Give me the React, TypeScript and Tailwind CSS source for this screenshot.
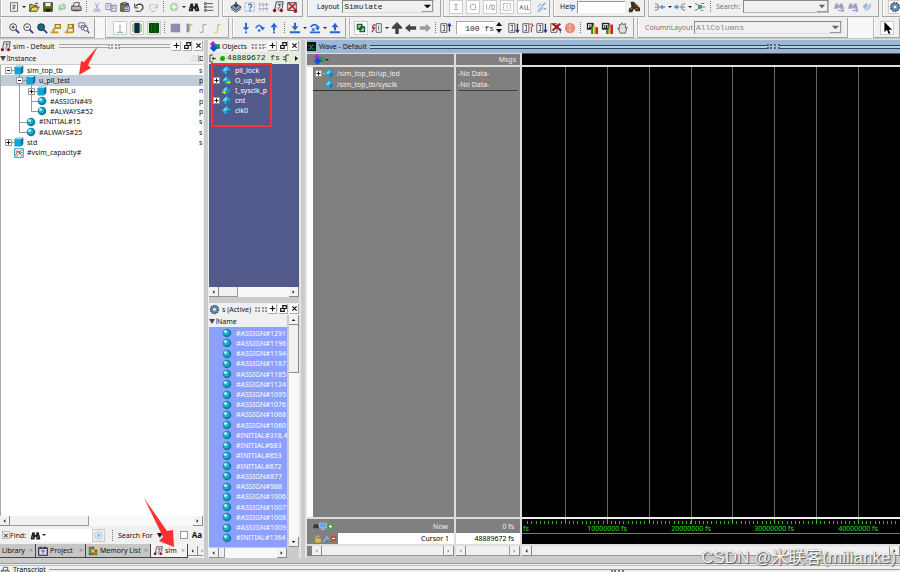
import type { ReactNode } from 'react'

const icons: Record<string, ReactNode> = {
  doc: <><path d="M3 2h8v10H3z" fill="#fff" stroke="#555" /><path d="M5 5h4M5 7h4M5 9h3M7 4v6" stroke="#666" /></>,
  open: <><path d="M2 12V4h3l1 1h4v2" fill="#d8c030" stroke="#333" /><path d="M2 12l3-5h8l-3 5z" fill="#e8dc50" stroke="#333" /><path d="M8 3q3-2 4 1" fill="none" stroke="#333" /></>,
  save: <><path d="M2 2h10v10H2z" fill="#6b7400" stroke="#222" /><path d="M4 2h6v4H4z" fill="#eee" /><path d="M4 9h6v3H4z" fill="#222" /></>,
  refresh: <><path d="M2 7q1-4 6-3V2l4 3-4 3V6Q5 5 4 8z" fill="#a9d6b4" /><path d="M12 7q-1 4-6 3v2L2 9l4-3v2q3 1 4-2z" fill="#93cda4" /></>,
  print: <><path d="M4 6l1-4h6l-1 4" fill="#fff" stroke="#333" /><path d="M2 6h10l1 2v3H2z" fill="#bbb" stroke="#333" /><path d="M4 10h7v2H4z" fill="#555" /></>,
  cut: <><path d="M5 2l3 7M9 2L6 9" stroke="#9aa3c8" fill="none" /><circle cx="5" cy="11" r="1.5" fill="none" stroke="#8890d8" /><circle cx="9" cy="11" r="1.5" fill="none" stroke="#8890d8" /></>,
  copy: <><path d="M1 3h6v7H1z" fill="#eee" stroke="#8084a8" /><path d="M7 5h6v7H7z" fill="#eee" stroke="#6a6fa8" /><path d="M3 5h2M3 7h2M8 7h3M8 9h3" stroke="#889" /></>,
  paste: <><path d="M2 3h9v9H2z" fill="#8a7a30" stroke="#333" /><path d="M4 2h5v2H4z" fill="#ccc" stroke="#333" /><path d="M6 6h6v6H6z" fill="#fff" stroke="#3040a0" /><path d="M7 8h4M7 10h4" stroke="#3040a0" /></>,
  undo: <><path d="M3 6q4-4 8-1 2 4-2 6" fill="none" stroke="#333" strokeWidth="1.3" /><path d="M2 3v5h4M3 12h6" fill="none" stroke="#222" /></>,
  redo: <><path d="M11 6Q7 2 3 5q-1 4 2 6" fill="none" stroke="#bbb" /><path d="M12 3v5H8M5 12h5" fill="none" stroke="#aaa" /></>,
  add: <><circle cx="7" cy="7" r="5" fill="#a8d5a8" /><path d="M7 4v6M4 7h6" stroke="#fff" strokeWidth="2" /></>,
  find: <><path d="M3 3h3v3h2V3h3l2 7v2H8V9H6v3H1v-2z" fill="#222" /><path d="M3 8v2M10 8v2" stroke="#8ab" /></>,
  list: <path d="M3 2h2v2H3zM3 6h2v2H3zM3 10h2v2H3zM6 3h7M6 7h7M6 11h7" stroke="#444" fill="none" />,
  stack: <><path d="M1 7l6-4 6 4-6 4z" fill="#8aa0c8" stroke="#334" /><path d="M1 9l6 4 6-4" fill="none" stroke="#334" /><path d="M7 1v6M5 5l2 2 2-2" fill="none" stroke="#235" strokeWidth="1.4" /></>,
  query: <><path d="M1 2h11v10H1z" fill="#eef" stroke="#8ab" strokeDasharray="2 1" /><path d="M5 5q2-3 4 0 0 2-2 3v1M7 10v2" fill="none" stroke="#3a78b8" strokeWidth="1.5" /></>,
  grid: <path d="M2 2v10M6 2v10M10 2v10M1 4h12M1 9h12" stroke="#8a90b8" strokeDasharray="2 1" />,
  sim: <><path d="M3 11L5 1h8l-1 7-4 4" fill="#e4e4e8" stroke="#334" /><path d="M8 3q3 3-1 7M7 4h4" fill="none" stroke="#446" /><circle cx="3" cy="11" r="2" fill="#801828" /><circle cx="11" cy="11" r="2" fill="#a11832" /></>,
  simx: <><path d="M2 2h10v9H2z" fill="#ddd" stroke="#334" /><path d="M3 2l9 9M12 2l-9 8" stroke="#c01818" strokeWidth="1.8" /><circle cx="11" cy="12" r="2" fill="#a11832" /></>,
  pipe: <path d="M5 4h4M7 4v6M5 10h4" stroke="#999" fill="none" />,
  circ: <path d="M5 4h4l1 1v4l-1 1H5l-1-1V5z" stroke="#999" fill="none" />,
  io: <><path d="M3 4v6M8 4L5 10" stroke="#999" /><path d="M9 5h3v5H9z" fill="none" stroke="#999" /></>,
  box: <path d="M3 3h8v8H3zM7 5v4" stroke="#999" fill="none" strokeDasharray="2 1" />,
  all: <path d="M2 10l2-5 2 5M3 8h2M8 5v5h2M11 5v5h2" stroke="#777" fill="none" />,
  brush: <><path d="M2 12l5-6 3 2-5 5z" fill="#a8b8e0" /><path d="M8 6l4-4M5 4h2M10 9h3M3 6h2" stroke="#78a8d8" strokeWidth="1.6" /></>,
  find2: <><path d="M3 1h4l3 4 4 3v4H9L7 9l-2 4H1V9l3-2z" fill="#332" /><path d="M8 3l4 3M3 9h2M9 9h2" stroke="#d06018" strokeWidth="1.5" /></>,
  inA: <><path d="M1 3q4 0 5 4-1 4-5 4M1 7h5" fill="none" stroke="#666" /><path d="M13 7H8M10 5L8 7l2 2" fill="none" stroke="#4a90e8" strokeWidth="1.6" /></>,
  inB: <><path d="M13 3q-4 0-5 4 1 4 5 4M13 7H8" fill="none" stroke="#666" /><path d="M1 7h5M4 5L1 7l3 2" fill="none" stroke="#4a90e8" strokeWidth="1.6" /></>,
  inC: <><path d="M1 3q4 0 5 4-1 4-5 4M6 7h7M8 3h4M8 11h3" fill="none" stroke="#666" /><circle cx="7" cy="7" r="2.5" fill="#4a9a58" /></>,
  findDim: <><path d="M3 3h3v2h2V3h3l2 6H8V8H6v1H1z" fill="#a0a4b0" /><path d="M6 11h6M10 9l3 2-3 2" fill="none" stroke="#8080e0" /></>,
  brushDim: <><path d="M2 6l4-4 2 3 4-2-1 5-5 4z" fill="#a8b4cc" /><path d="M4 11l6-6" stroke="#c8e0f0" strokeWidth="2" /></>,
  gear: <><circle cx="7" cy="7" r="5" fill="#6b8cae" stroke="#3c5a78" strokeWidth="2" strokeDasharray="2 1" /><circle cx="7" cy="7" r="1.6" fill="#fff" /></>,
  zin: <><circle cx="6" cy="6" r="4" fill="#fff" stroke="#333" /><path d="M4 6h4M6 4v4" stroke="#223" /><path d="M9 9l4 4" stroke="#3038a0" strokeWidth="2" /></>,
  zout: <><circle cx="6" cy="6" r="4" fill="#fff" stroke="#333" /><path d="M4 6h4" stroke="#223" /><path d="M9 9l4 4" stroke="#3038a0" strokeWidth="2" /></>,
  zfull: <><circle cx="6" cy="6" r="4" fill="#1b6a84" stroke="#123" /><path d="M9 9l4 4" stroke="#3038a0" strokeWidth="2" /></>,
  zcur: <><path d="M6 3h6v4H6z" fill="#eee" stroke="#a88010" strokeWidth="1.5" /><path d="M1 12h9M4 8v4M6 7l-3 3" stroke="#c89810" strokeWidth="2" /></>,
  zcur2: <><path d="M5 3h5v4H5zM11 2v10" fill="#eee" stroke="#a88010" strokeWidth="1.5" /><path d="M1 12h10M4 8v4" stroke="#c89810" strokeWidth="2" /></>,
  zsel: <><path d="M1 1h7v5H1zM4 4h6v5H4z" fill="#eee" stroke="#668" /><circle cx="9" cy="8" r="2.5" fill="#fff" stroke="#446" /><path d="M11 10l2 3" stroke="#4048b0" strokeWidth="1.6" /></>,
  w1: <><path d="M0 0h14v14H0z" fill="#fff" /><path d="M7 3v9M3 12h8" stroke="#58a878" /></>,
  w2: <><path d="M1 2h12v10H1z" fill="#a8c8a0" /><path d="M4 1h6v12H4z" fill="#102848" /></>,
  w3: <><path d="M1 1h12v12H1z" fill="#0a4a0a" /><path d="M4 2v10M8 2v10" stroke="#0c7a0c" /></>,
  w4: <><path d="M2 2h11v10H2z" fill="#8888b0" /><path d="M2 4h11M2 7h11M2 10h11" stroke="#9ab09a" strokeDasharray="1 1" /></>,
  w5: <><path d="M4 2h3v10H4z" fill="#8890b0" /><path d="M8 2v4l-1 6M8 3h3" stroke="#c0c040" strokeWidth="1.4" fill="none" /></>,
  w6: <path d="M3 12h4V3h4" fill="none" stroke="#70b080" />,
  w7: <path d="M3 12h4l1-5V3h3" fill="none" stroke="#c8cc50" strokeWidth="1.3" />,
  stepIn: <><path d="M7 1v7" stroke="#2468d8" strokeWidth="2.4" /><path d="M3 6h8l-4 4z" fill="#2468d8" /><circle cx="7" cy="12" r="1.3" fill="#2468d8" /></>,
  stepOver: <><path d="M2 7q4-6 8 0" fill="none" stroke="#3080e0" strokeWidth="2" /><path d="M7 6h6l-3 4z" fill="#2468d8" /><circle cx="6" cy="10" r="1.5" fill="#2468d8" /></>,
  stepOut: <><path d="M7 10V4" stroke="#2468d8" strokeWidth="2.4" /><path d="M3 6h8L7 1z" fill="#2468d8" /><circle cx="7" cy="12" r="1.3" fill="#2468d8" /></>,
  stepInB: <><path d="M7 1v5M1 12h12" stroke="#2468d8" strokeWidth="2.4" /><path d="M3 5h8l-4 5z" fill="#2468d8" /></>,
  stepOverB: <><path d="M2 6q4-6 9 0M1 12h12" fill="none" stroke="#2468d8" strokeWidth="2" /><path d="M7 6h6l-3 4z" fill="#2468d8" /><circle cx="5" cy="9" r="2" fill="#4088e8" /></>,
  stepOutB: <><path d="M7 10V4M1 12h12" stroke="#2468d8" strokeWidth="2.4" /><path d="M3 6h8L7 1z" fill="#2468d8" /></>,
  restart: <path d="M3 3h5v5H3zM6 6h5v5H6z" fill="none" stroke="#106828" strokeWidth="1.8" />,
  runDoc: <><path d="M6 2h6v10H6zM9 4v6" fill="#fff" stroke="#444" /><path d="M5 3Q1 4 2 7h2l-3 5" fill="none" stroke="#b02850" strokeWidth="1.5" /></>,
  up: <path d="M7 0l6 6v2H9v6H5V8H1V6z" fill="#444" />,
  left: <path d="M0 7l6-5v3h7v4H6v3z" fill="#444" />,
  right: <path d="M14 7L8 2v3H1v4h7v3z" fill="#999" />,
  run: <><path d="M1 2h7v10H1zM5 4v6M3 4h3M3 10h3" fill="#fff" stroke="#445" /><path d="M11 2v9M9 5l2-3 2 3" fill="none" stroke="#2030a0" strokeWidth="1.4" /></>,
  runDown: <><path d="M1 2h7v10H1zM5 4v6M3 4h3M3 10h3" fill="#fff" stroke="#445" /><path d="M11 2v9M9 9l2 3 2-3" fill="none" stroke="#2030a0" strokeWidth="1.4" /></>,
  runRed: <><path d="M1 2h7v10H1zM5 4v6M3 4h3M3 10h3" fill="#fff" stroke="#445" /><path d="M11 6v6M9 3l2-1 2 2-2 2" fill="none" stroke="#d04848" strokeWidth="1.4" /></>,
  runX: <><path d="M1 2h7v10H1z" fill="#fff" stroke="#445" /><path d="M3 2l10 8M12 2l-9 8" stroke="#a01818" strokeWidth="2.4" /><path d="M12 8v5" stroke="#2030a0" /></>,
  stop: <><circle cx="7" cy="7" r="6" fill="#e88878" /><path d="M4 5h6M4 9h6M7 2v10" stroke="#f8c0b0" /></>,
  pa: <><path d="M1 1h8v8H1z" fill="#222" /><path d="M3 7V3h3v2H3" stroke="#fff" fill="none" /><path d="M6 6h3v8H6z" fill="#283" /><path d="M8 4h3v10H8z" fill="#dc2" /><path d="M11 6h3v8h-3z" fill="#c22" /></>,
  mem: <><path d="M1 1h9v8H1z" fill="#222" /><path d="M3 7V3h5v4M5 3v4" stroke="#fff" fill="none" /><path d="M6 8h3v6H6z" fill="#283" /><path d="M9 6h2v8H9z" fill="#dc2" /><path d="M11 3h3v11h-3z" fill="#c22" /></>,
  hand: <path d="M2 7l2 1V3h2l1-2 1 2 3-1v5l2-1-2 7H5z" fill="#ddd" stroke="#555" />,
  arrow: <path d="M4 0v12l3-3 2 5 2-1-2-4h4z" fill="#000" />,
  cube: <><path d="M1 3l2-2h10v9l-3 3H1z" fill="#0c6c94" /><path d="M1 3h9v10H1z" fill="#12a4d4" /><path d="M1 3l2-2h10l-3 2z" fill="#8fe4f4" /></>,
  ball: <><circle cx="7" cy="7" r="6" fill="#1180a4" /><circle cx="6" cy="6" r="4" fill="#22b0d2" /><circle cx="5" cy="5" r="2" fill="#d0f8fc" /></>,
  diamond: <><path d="M7 0l7 7-7 7-7-7z" fill="#1478b0" /><path d="M7 0l7 7H7v7L0 7z" fill="#2aa8dc" /><path d="M7 1v6H1z" fill="#80dcf0" /></>,
  diamondOut: <><path d="M7 0l7 7-7 7-7-7z" fill="#1c8fc0" /><path d="M7 1v6H1z" fill="#8be0f0" /><path d="M7 9h3V7l4 3-4 3v-2H7z" fill="#c8f020" /></>,
  diamondIn: <><path d="M7 0l7 7-7 7-7-7z" fill="#1c8fc0" /><path d="M7 1v6H1z" fill="#8be0f0" /><path d="M0 9h3V7l4 3-4 3v-2H0z" fill="#c8f020" /></>,
  capacity: <><path d="M1 1h12v12H1z" fill="#fff" stroke="#2a9ac0" strokeWidth="1.5" /><path d="M2 10l4-6 5 7M3 4l4 2 4-3" stroke="#d03838" strokeWidth="1.4" fill="none" /><path d="M3 12l4-4 5-2" stroke="#28a048" strokeWidth="1.4" fill="none" /></>,
  objects: <><path d="M5 0l4 4-4 4-4-4z" fill="#c020c8" /><path d="M7 4h7v6H7z" fill="#18a050" /><path d="M6 4l5 5-5 5-5-5z" fill="#1450e0" /></>,
  wave: <><path d="M0 0h14v14H0z" fill="#111" /><path d="M2 5h3v2h3V5h3M2 11h3V9h3v2h4" stroke="#28c078" fill="none" /></>,
  project: <><path d="M1 3h12v10H1z" fill="#dde" stroke="#223" strokeWidth="1.5" /><path d="M2 1h3v3H2zM8 1h3v3H8z" fill="#336" /><path d="M4 7h6M7 5v6" stroke="#8060a0" strokeWidth="1.5" /></>,
  memory: <><path d="M1 1h12v12H1z" fill="#dd3" /><path d="M1 1h4v4H1zM9 5h4v4H9zM5 9h4v4H5z" fill="#d33" /><path d="M5 1h4v4H5zM1 9h4v4H1z" fill="#36c" /><path d="M1 5h4v4H1zM9 9h4v4H9z" fill="#2a4" /></>,
  go: <><circle cx="7" cy="7" r="5" fill="#dce8f4" stroke="#b0c4d8" /><path d="M6 4l4 3-4 3z" fill="#98b4d0" /></>,
  screen: <path d="M1 2h12v8H8l2 3H4l2-3H1z" fill="#6aa0e8" stroke="#c0d8f8" />,
  addSm: <><circle cx="7" cy="7" r="6" fill="#48a848" /><path d="M7 4v6M4 7h6" stroke="#fff" strokeWidth="2" /></>,
  del: <><circle cx="7" cy="7" r="6" fill="#e04030" /><path d="M4 7h6" stroke="#fff" strokeWidth="2" /></>,
  lock: <><path d="M2 6h10v7H2z" fill="#e8b838" /><path d="M4 6V3q3-3 6 0" fill="none" stroke="#e0c880" strokeWidth="1.6" /></>,
  wrench: <path d="M2 12l7-8M8 2l1 3 3 1" stroke="#88b8f0" strokeWidth="2.6" fill="none" />,
}

function Icon({ name, size = 14 }: { name: string; size?: number }) {
  return (
    <svg width={size} height={size} viewBox="0 0 14 14" className="shrink-0" aria-hidden="true">
      {icons[name]}
    </svg>
  )
}

function Tool({ name, raised }: { name: string; raised?: boolean }) {
  return (
    <button
      aria-label={name}
      className={raised
        ? 'flex w-[14px] h-[14px] shrink-0 items-center justify-center bg-white border border-[#ccc]'
        : 'flex w-[14px] h-[14px] shrink-0 items-center justify-center'}
    >
      <Icon name={name} size={12} />
    </button>
  )
}

function Caret() {
  return (
    <svg width="6" height="14" viewBox="0 0 6 14" className="shrink-0" aria-hidden="true">
      <path d="M1 6h4L3 8z" fill="#222" />
    </svg>
  )
}

function Sep() {
  return <div className="mx-[3px] h-[11px] shrink-0 border-l border-dotted border-[#777]" />
}

// '|' is a separator, 'v' a drop-down caret, anything else an icon
function Tools({ items, raised }: { items: string; raised?: boolean }) {
  return (
    <>
      {items.split(' ').map((it, i) =>
        it === '|' ? <Sep key={i} /> : it === 'v' ? <Caret key={i} /> : <Tool key={i} name={it} raised={raised} />
      )}
    </>
  )
}

function Group({ className, children }: { className: string; children: ReactNode }) {
  return (
    <div className={`flex shrink-0 items-center border-r border-b border-l border-[#a4a4a4] border-l-[#b8b8b8] shadow-[inset_1px_0_0_#fff] ${className}`}>
      {children}
    </div>
  )
}

function Combo({ label, value, className, dim }: { label: string; value: string; className: string; dim?: boolean }) {
  return (
    <div className={`flex h-[13px] border border-t-[#888] border-l-[#888] border-b-[#ddd] border-r-[#ddd] ${className}`}>
      <select
        aria-label={label}
        className={`min-w-0 flex-1 appearance-none px-px font-['Liberation_Mono',monospace] text-[8px] leading-none ${dim ? 'text-[#888]' : 'text-[#222]'}`}
      >
        <option>{value}</option>
      </select>
      <svg width="11" height="11" viewBox="0 0 11 11" className="shrink-0 border-r border-b border-[#999] bg-[#f0f0f0]" aria-hidden="true">
        <path d="M2 4h8L6 8z" fill={dim ? '#666' : '#000'} />
      </svg>
    </div>
  )
}

function PanelTitle({ icon, title }: { icon: string; title: string }) {
  return (
    <div className="flex h-[12px] shrink-0 items-center gap-[2px] bg-[#f0f0f0]">
      <Icon name={icon} size={11} />
      <span className="whitespace-nowrap">{title}</span>
      <div className="ml-[2px] flex h-[4px] min-w-0 flex-1 items-center justify-center border-y border-[#a8a8a8]">
        <div className="h-[5px] w-[12px] shrink-0 border-y-2 border-dotted border-[#999] bg-[#f0f0f0]" />
      </div>
      {['M5 1v8M1 5h8', 'M4 1h5v4H4zM1 5h5v4H1z', 'M2 2l6 6M8 2l-6 6'].map((d, i) => (
        <button key={d} aria-label={['Zoom', 'Undock', 'Close'][i]} className="flex h-[10px] w-[9px] items-center justify-center border-r border-b border-[#aaa] bg-white">
          <svg width="7" height="7" viewBox="0 0 10 10" aria-hidden="true"><path d={d} fill="none" stroke="#111" strokeWidth="1.7" /></svg>
        </button>
      ))}
    </div>
  )
}

function Arrow({ dir, dim }: { dir: 'l' | 'r' | 'u' | 'd'; dim?: boolean }) {
  const d = { l: 'M6 3v4L4 5z', r: 'M4 3v4l2-2z', u: 'M3 6h4L5 4z', d: 'M3 4h4L5 6z' }[dir]
  return (
    <button aria-label="Scroll" className="flex h-[10px] w-[10px] shrink-0 items-center justify-center border-r border-b border-[#888] bg-[#f2f2f2]">
      <svg width="10" height="10" viewBox="0 0 10 10" aria-hidden="true"><path d={d} fill={dim ? '#999' : '#111'} /></svg>
    </button>
  )
}

function HScroll({ thumb, dim }: { thumb: string; dim?: boolean }) {
  return (
    <div className="flex h-[10px] shrink-0 bg-[#f8f8f8]">
      <Arrow dir="l" dim={dim} />
      <div className="flex min-w-0 flex-1">
        <div className={`border-r border-b border-[#999] bg-[#f0f0f0] ${thumb}`} />
      </div>
      <Arrow dir="r" dim={dim} />
    </div>
  )
}

function PlusBox() {
  return (
    <svg width="7" height="7" viewBox="0 0 7 7" className="shrink-0" aria-hidden="true">
      <path d="M.5 .5h6v6h-6z" fill="#fff" stroke="#999" />
      <path d="M1.500 3.500h4M3.500 1.500v4" stroke="#111" />
    </svg>
  )
}

type Node = { label: string; depth: number; icon: string; box?: '+' | '-'; kind: string; rails?: number[]; end?: boolean }

const tree: Node[] = [
  { label: 'sim_top_tb', depth: 0, icon: 'cube', box: '-', kind: 's' },
  { label: 'u_pll_test', depth: 1, icon: 'cube', box: '-', kind: 'p', rails: [18] },
  { label: 'mypll_u', depth: 2, icon: 'cube', box: '+', kind: 'm', rails: [18, 30] },
  { label: '#ASSIGN#49', depth: 2, icon: 'ball', kind: 'p', rails: [18, 30] },
  { label: '#ALWAYS#52', depth: 2, icon: 'ball', kind: 'p', rails: [18, 30], end: true },
  { label: '#INITIAL#15', depth: 1, icon: 'ball', kind: 's', rails: [18] },
  { label: '#ALWAYS#25', depth: 1, icon: 'ball', kind: 's', rails: [18], end: true },
  { label: 'std', depth: 0, icon: 'cube', box: '+', kind: 's' },
  { label: '#vsim_capacity#', depth: 0, icon: 'capacity', kind: '' },
]

const indent = ['w-[13px]', 'w-[25px]', 'w-[36px]']

function TreeRow({ node, selected }: { node: Node; selected: boolean }) {
  const x = [7, 18, 30][node.depth]
  const rails = node.rails ?? []
  return (
    <div role="treeitem" aria-selected={selected} className={`flex min-h-0 flex-1 items-center ${selected ? 'bg-[#c0cdd8]' : ''}`}>
      <svg className={`h-[10px] shrink-0 overflow-visible ${indent[node.depth]}`} aria-hidden="true">
        {rails.map((r, i) => (
          <line key={r} x1={r + 0.5} x2={r + 0.5} y1="-1" y2={node.end && i === rails.length - 1 ? 5 : 11} stroke="#999" />
        ))}
        {node.icon !== 'capacity' && <line x1={x} x2={x + 8} y1="5.500" y2="5.500" stroke="#999" />}
        {node.box && (
          <svg x={x - 3} y="2" width="7" height="7">
            <path d="M.5 .5h6v6h-6z" fill="#fff" stroke="#999" />
            <path d={node.box === '-' ? 'M2 3.500h3' : 'M1.500 3.500h4M3.500 1.500v4'} stroke="#111" />
          </svg>
        )}
      </svg>
      <Icon name={node.icon} size={10} />
      <span className="ml-[3px] flex-1">{node.label}</span>
      <span className="w-[4px]">{node.kind}</span>
    </div>
  )
}

const objects = [
  { label: 'pll_lock', icon: 'diamond' },
  { label: 'O_up_led', icon: 'diamondOut', box: true },
  { label: 'I_sysclk_p', icon: 'diamondIn' },
  { label: 'cnt', icon: 'diamond', box: true },
  { label: 'clk0', icon: 'diamond' },
]

const processes = [
  '#ASSIGN#1291', '#ASSIGN#1196', '#ASSIGN#1194', '#ASSIGN#1187', '#ASSIGN#1185', '#ASSIGN#1124', '#ASSIGN#1095',
  '#ASSIGN#1076', '#ASSIGN#1068', '#ASSIGN#1060', '#INITIAL#318,4', '#INITIAL#683', '#INITIAL#853', '#INITIAL#872',
  '#ASSIGN#877', '#ASSIGN#988', '#ASSIGN#1006', '#ASSIGN#1007', '#ASSIGN#1008', '#ASSIGN#1009', '#INITIAL#1364',
]

const gridX = [43, 85, 127, 169, 210, 252, 294, 336]

function Toolbars() {
  return (
    <header className="shrink-0 overflow-hidden border-b border-[#c8c8c8]">
      <div className="flex h-[18px] pb-px">
        <Group className="w-[219px] pb-[3px] pl-[6px]">
          <Tools items="doc v open save refresh print | cut copy paste undo redo | add v find list" />
        </Group>
        <Group className="ml-[3px] w-[81px] pb-[3px] pl-[6px]">
          <Tools items="stack query grid sim simx" />
        </Group>
        <Group className="ml-[4px] w-[134px] pb-[3px] pl-[9px]">
          <span>Layout</span>
          <Combo label="Layout" value="Simulate" className="ml-[3px] w-[92px]" />
        </Group>
        <Group className="ml-[2px] w-[107px] gap-[3px] pb-[3px] pl-[5px]">
          <Tools items="pipe circ io box all" raised />
          <Tool name="brush" />
        </Group>
        <Group className="ml-[3px] w-[92px] pb-[3px] pl-[6px]">
          <label htmlFor="help">Help</label>
          <input id="help" className="mx-[2px] h-[12px] w-[48px] border-t border-l border-[#999] bg-white" />
          <Tool name="find2" />
        </Group>
        <Group className="ml-[3px] w-[231px] pb-[3px] pl-[4px]">
          <Tools items="inA v inB v inC |" />
          <label htmlFor="search" className="ml-[2px] text-[#777]">Search:</label>
          <div className="ml-[3px] flex h-[13px] w-[86px] border border-[#bbb] border-t-[#888] border-l-[#888]">
            <input id="search" className="min-w-0 flex-1" />
            <svg width="11" height="11" viewBox="0 0 11 11" className="border-r border-b border-[#999]" aria-hidden="true"><path d="M2 4h7L5.500 8z" fill="#666" /></svg>
          </div>
          <div className="ml-[3px] flex"><Tools items="findDim findDim brushDim" /></div>
        </Group>
        <Group className="ml-[3px] flex-1 pb-[3px] pl-[5px]">
          <Tool name="gear" raised />
        </Group>
      </div>
      <div className="flex h-[20px]">
        <Group className="w-[95px] pl-[6px]">
          <Tools items="zin zout zfull zcur zcur2 zsel" />
        </Group>
        <div className="w-[10px] bg-[#f8f8f8]" />
        <Group className="w-[124px] pl-[7px]">
          <div className="flex gap-[3px]"><Tools items="w1 w2 w3" raised /></div>
          <Tools items="| w4 w5 w6 w7" />
        </Group>
        <Group className="ml-[3px] w-[114px] pl-[6px]">
          <Tools items="stepIn stepOver stepOut | stepInB v stepOverB v stepOutB" />
        </Group>
        <Group className="ml-[3px] w-[285px] pl-[4px]">
          <Tool name="restart" raised />
          <div className="ml-[2px] flex items-center"><Tools items="runDoc v up left right | run" /></div>
          <input aria-label="Run length" defaultValue="100 fs" className="ml-[3px] h-[13px] w-[39px] border-t border-l border-[#aaa] bg-white px-px text-right font-['Liberation_Mono',monospace] text-[8px] text-[#222]" />
          <svg width="8" height="13" viewBox="0 0 8 13" className="mr-[4px] bg-[#eee]" aria-hidden="true"><path d="M1 5h6L4 1zM1 8h6l-3 4z" fill="#111" /></svg>
          <Tools items="runDown runRed runDown runX stop |" />
          <div className="ml-px flex gap-px"><Tools items="pa mem hand" /></div>
        </Group>
        <Group className="ml-[3px] w-[211px] pl-[7px]">
          <span className="text-[#777]">ColumnLayout</span>
          <Combo label="ColumnLayout" value="AllColumns" dim className="mr-[5px] ml-px min-w-0 flex-1" />
        </Group>
        <div className="w-[25px] bg-[#f8f8f8]" />
        <Group className="flex-1 pl-[6px]">
          <Tool name="arrow" raised />
        </Group>
      </div>
    </header>
  )
}

function SimPanel() {
  return (
    <section className="flex w-[203px] shrink-0 flex-col bg-[#f0f0f0]">
      <PanelTitle icon="sim" title="sim - Default" />
      <div className="flex h-[13px] shrink-0 items-center border-b border-[#ccc] bg-[#f0f0f0]">
        <span className="w-[8px] border-r border-[#999] text-[6px] text-[#444]">▼</span>
        <span className="flex-1">Instance</span>
        <span className="text-[6px] text-[#888]">△</span>
        <span className="ml-px w-[5px] border-l border-[#999]">D</span>
      </div>
      <div className="min-h-0 flex-1 overflow-hidden border-l border-[#aaa] bg-white">
        <div role="tree" className="flex h-[93px] flex-col">
          {tree.map((n, i) => <TreeRow key={n.label} node={n} selected={i === 1} />)}
        </div>
      </div>
      <HScroll thumb="w-[79px]" />
      <div className="flex h-[18px] shrink-0 items-center">
        <button aria-label="Close find" className="ml-[2px] flex h-[8px] w-[8px] items-center justify-center border border-[#bbb]">✕</button>
        <label htmlFor="find">Find:</label>
        <div className="ml-[4px] flex h-[13px] w-[75px] items-center bg-white">
          <Icon name="find" size={11} />
          <Caret />
          <input id="find" className="min-w-0 flex-1" />
          <button aria-label="Find next" className="border border-[#ccc] bg-[#eee]"><Icon name="go" size={11} /></button>
        </div>
        <div className="ml-[4px] flex items-center"><Sep /></div>
        <button className="ml-[2px] flex items-center whitespace-nowrap">Search For<span className="ml-[4px] text-[6px]">▼</span></button>
        <input type="checkbox" aria-label="Match case" className="ml-auto h-[8px] w-[8px] appearance-none border border-[#999] bg-white" />
        <span className="mr-px ml-[4px] text-[8px] font-bold">Aa</span>
      </div>
      <div className="flex h-[14px] shrink-0 items-stretch">
        {[
          { label: 'Library', w: 'w-[36px]' },
          { label: 'Project', icon: 'project', w: 'w-[50px]' },
          { label: 'Memory List', icon: 'memory', w: 'w-[65px]' },
          { label: 'sim', icon: 'sim', w: 'w-[37px]' },
        ].map(t => (
          <button key={t.label} className={`flex items-center gap-[2px] border-r border-b border-[#444] pl-[2px] whitespace-nowrap ${t.w} ${t.label === 'sim' ? 'bg-[#f4f4f4]' : 'bg-[#c6c6c6]'}`}>
            {t.icon && <Icon name={t.icon} size={10} />}
            {t.label}
            <span className="ml-auto pr-[2px] text-[#888]">×</span>
          </button>
        ))}
        <div className="ml-auto flex items-center"><Arrow dir="l" /><div className="w-[5px] overflow-hidden"><Arrow dir="r" dim /></div></div>
      </div>
    </section>
  )
}

function MiddleColumn() {
  return (
    <div className="flex w-[90px] shrink-0 flex-col">
      <section className="flex h-[257px] shrink-0 flex-col">
        <PanelTitle icon="objects" title="Objects" />
        <div className="flex h-[12px] shrink-0 items-center justify-between bg-[#e4ecdc] text-[#222]">
          <svg width="8" height="9" viewBox="0 0 8 9" aria-hidden="true"><path d="M4 1H1v7h3M7 4.500H3M5 3L3 4.500 5 6" fill="none" stroke="#444" /></svg>
          <span className="h-[5px] w-[5px] rounded-full bg-[#18a818]" />
          <span className="font-['Liberation_Mono',monospace] text-[8px]">48889672 fs</span>
          <svg width="8" height="9" viewBox="0 0 8 9" aria-hidden="true"><path d="M7 1H4v7M1 3h3M1 5.500h3" fill="none" stroke="#444" /></svg>
          <svg width="6" height="9" viewBox="0 0 6 9" aria-hidden="true"><path d="M2 2v5l3-2.500z" fill="#111" /></svg>
        </div>
        <div className="flex-1 bg-[#515a8a] pt-px text-white">
          <div className="flex h-[51px] flex-col">
            {objects.map(o => (
              <div key={o.label} className="flex flex-1 items-center">
                <div className="flex w-[13px] pl-[4px]">{o.box && <PlusBox />}</div>
                <Icon name={o.icon} size={9} />
                <span className="ml-[4px]">{o.label}</span>
              </div>
            ))}
          </div>
        </div>
        <HScroll thumb="w-[19px]" />
      </section>
      <section className="mt-[6px] flex min-h-0 flex-1 flex-col">
        <PanelTitle icon="gear" title="s (Active)" />
        <div className="flex min-h-0 flex-1">
          <div className="flex min-w-0 flex-1 flex-col">
            <div className="flex h-[12px] shrink-0 items-center bg-[#f0f0f0]">
              <span className="w-[8px] border-r border-[#999] text-[6px] text-[#444]">▼</span>Name
            </div>
            <div className="min-h-0 flex-1 overflow-hidden bg-[#8ca0ff] pt-px text-white">
              <ul className="flex h-[215px] flex-col">
                {processes.map(p => (
                  <li key={p} className="flex flex-1 items-center overflow-hidden pl-[13px] whitespace-nowrap">
                    <Icon name="ball" size={10} />
                    <span className="ml-[4px]">{p}</span>
                  </li>
                ))}
              </ul>
            </div>
          </div>
          <div className="ml-[2px] flex w-[10px] flex-col bg-[#f8f8f8]">
            <Arrow dir="u" />
            <div className="h-[48px] border-r border-b border-[#888] bg-[#f0f0f0]" />
            <div className="flex-1" />
            <Arrow dir="d" />
          </div>
        </div>
        <div className="mt-px mr-[12px]"><HScroll thumb="w-[6px]" /></div>
      </section>
    </div>
  )
}

function WavePanel() {
  return (
    <section className="flex min-w-0 flex-1 flex-col pb-[2px]">
      <div className="flex h-[13px] shrink-0 items-center gap-[3px] bg-[#9db8d6]">
        <Icon name="wave" size={9} />
        <span>Wave - Default</span>
        <div className="flex h-[4px] flex-1 items-center border-y border-[#2c4860] bg-[#b4d4e4]">
          <div className="w-3/4" />
          <div className="h-[5px] w-[13px] border-y-2 border-dotted border-[#567] bg-[#a8c4dc]" />
        </div>
      </div>
      <div className="flex min-h-0 flex-1 bg-[#808080] text-[#eee]">
        <div className="flex w-[149px] shrink-0 flex-col border-r-2 border-[#ddd]">
          <div className="flex h-[14px] shrink-0 items-center border-t border-b-2 border-[#ddd] pl-[6px]"><Icon name="objects" size={11} /><Caret /></div>
          <div className="flex flex-1 border-l-[6px] border-white">
            <div className="flex-1 pt-px">
              <div className="flex h-[11px] items-center pl-[2px]"><PlusBox /><span className="w-[3px] border-t border-[#aaa]" /><Icon name="diamond" size={9} /><span className="ml-[3px]">/sim_top_tb/up_led</span></div>
              <div className="flex h-[11px] items-center pl-[12px]"><Icon name="diamond" size={9} /><span className="ml-[3px]">/sim_top_tb/sysclk</span></div>
              <div className="mr-[3px] border-t border-l-2 border-[#333]" />
            </div>
          </div>
          <div className="flex h-[16px] shrink-0 items-center border-t-2 border-[#ddd] pr-[6px] pl-[6px]"><Icon name="find" size={6} /><Icon name="screen" size={8} /><Icon name="addSm" size={7} /><span className="ml-auto">Now</span></div>
          <div className="flex h-[11px] shrink-0 items-center pl-[7px]">
            <Icon name="lock" size={8} /><Icon name="wrench" size={8} /><Icon name="del" size={7} />
            <div className="ml-px flex h-full flex-1 items-center justify-end bg-white pr-[5px] text-black">Cursor 1</div>
          </div>
          <div className="border-t-2 border-[#ddd] pl-[5px]"><HScroll dim thumb="w-full" /></div>
        </div>
        <div className="flex w-[66px] shrink-0 flex-col border-r-2 border-[#ddd]">
          <div className="flex h-[14px] shrink-0 items-center justify-end border-t border-b-2 border-[#ddd] pr-[4px]">Msgs</div>
          <div className="flex-1 pt-px">
            <div className="flex h-[11px] items-center pl-[2px]">-No Data-</div>
            <div className="flex h-[11px] items-center pl-[2px]">-No Data-</div>
            <div className="mx-[2px] border-t border-[#444]" />
          </div>
          <div className="flex h-[16px] shrink-0 items-center justify-end border-t-2 border-[#ddd] pr-[6px]">0 fs</div>
          <div className="flex h-[11px] shrink-0 items-center justify-end bg-white pr-[6px] text-black">48889672 fs</div>
          <div className="border-t-2 border-[#ddd]"><HScroll dim thumb="w-full" /></div>
        </div>
        <div className="flex min-w-0 flex-1 flex-col bg-black">
          <div className="h-[14px] shrink-0 border-t border-b-2 border-t-[#555] border-b-[#ddd]" />
          <svg className="min-h-0 w-full flex-1" role="img" aria-label="Waveforms">
            {gridX.map(x => <line key={x} x1={x + 0.5} x2={x + 0.5} y1="0" y2="100%" stroke="#666" />)}
          </svg>
          <svg className="h-[27px] w-full shrink-0 border-t-2 border-[#eee]" role="img" aria-label="Timeline">
            {Array.from({ length: 90 }, (_, i) => {
              const x = Math.round(1 + (i + 1) * 4.185) + 0.5
              return <line key={i} x1={x} x2={x} y1="2" y2="5" stroke="#28b818" />
            })}
            {gridX.map(x => <line key={x} x1={x + 0.5} x2={x + 0.5} y1="0" y2="5" stroke="#30c820" />)}
            <text x="1" y="12" fill="#28e010">fs</text>
            {[85, 169, 252, 336].map((x, i) => <text key={x} x={x} y="12" textAnchor="middle" fill="#28e010">{`${i + 1}0000000 fs`}</text>)}
            <line x1="0" x2="100%" y1="14.500" y2="14.500" stroke="#777" />
          </svg>
          <div className="border-t-2 border-[#ddd]"><HScroll thumb="w-full" /></div>
        </div>
      </div>
    </section>
  )
}

export default function App() {
  return (
    <div className="relative flex h-screen flex-col overflow-hidden bg-[#f0f0f0] font-['Noto_Sans','Noto_Sans_CJK_SC',sans-serif] text-[7px] leading-none text-[#111]">
      <Toolbars />
      <main className="flex min-h-0 flex-1 border-t border-[#ddd] bg-[#cbcbcb]">
        <SimPanel />
        <div className="w-[6px] shrink-0 border-x border-[#eee]" />
        <MiddleColumn />
        <div className="w-[8px] shrink-0 border-x-2 border-[#e4e4e4]" />
        <WavePanel />
      </main>
      <div className="h-[6px] shrink-0 border-b border-[#999] bg-[#cbcbcb]" />
      <footer className="mt-px flex h-[7px] shrink-0 items-start gap-[3px] overflow-hidden border-t border-[#bbb]">
        <Icon name="print" size={10} />
        <span>Transcript</span>
        <div className="mt-[3px] flex h-[4px] flex-1 border-t border-[#999]">
          <div className="w-[66%]" />
          <div className="w-[13px] border-t-2 border-dotted border-[#777]" />
        </div>
      </footer>

      {/* Annotations */}
      <svg className="pointer-events-none absolute inset-0 h-full w-full" aria-hidden="true">
        <path d="M98 46L84 62l-3-1-2 14 12-7-3-3z" fill="#ff3030" />
        <path d="M144 498l23 33 6-1 1 17-15-6 4-4z" fill="#ff3030" />
        <rect x="212" y="64" width="59" height="62" fill="none" stroke="#f83038" strokeWidth="2" />
      </svg>
      <div className="absolute right-[4px] bottom-[6px] text-[17px] whitespace-nowrap text-[#f4f4f4] [text-shadow:1px_1px_1px_#555,0_0_1px_#888] font-['Liberation_Sans','Noto_Sans_CJK_SC',sans-serif]">
        CSDN @米联客(milianke)
      </div>
    </div>
  )
}
